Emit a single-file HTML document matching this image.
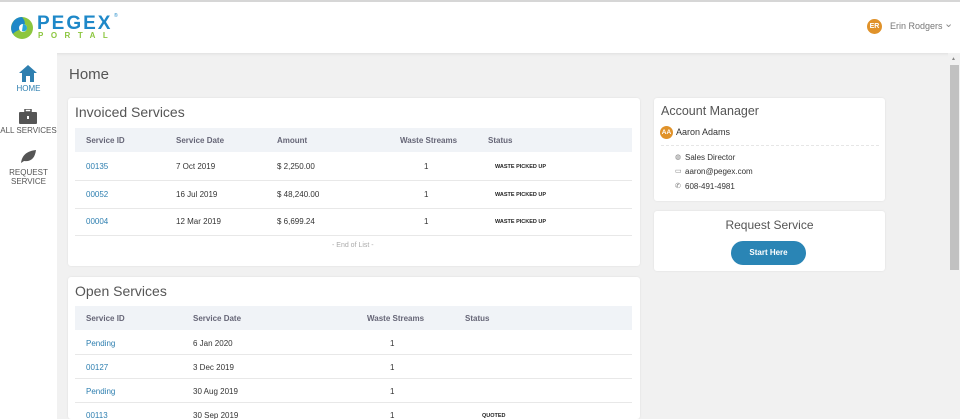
<!DOCTYPE html><html style="width:960px;height:419px;overflow:hidden"><head><style>
*{box-sizing:border-box;margin:0;padding:0}
body{width:960px;height:419px;overflow:hidden;background:#f1f1f1;font-family:"Liberation Sans",Arial,sans-serif;position:relative;color:#333}
.top{position:absolute;left:0;top:0;width:960px;height:53px;background:#fff;border-top:2px solid #d6d6d6;box-shadow:0 1px 3px rgba(0,0,0,.08)}
.side{position:absolute;left:0;top:53px;width:57px;height:366px;background:#fff}
.nav{position:absolute;width:57px;text-align:center;font-size:8px;color:#555}
.card{position:absolute;background:#fff;border-radius:3px;box-shadow:0 0 2px rgba(0,0,0,.08)}
.h{font-size:14px;color:#555;font-weight:300}
.a{position:absolute;font-size:8px;white-space:nowrap}
.th{position:absolute;left:7px;width:557px;height:24px;background:#f0f3f7}
.th .a{color:#667;font-weight:bold;top:8px;font-size:8px}
.line{position:absolute;left:7px;width:557px;height:1px;background:#e8e8e8}
.lnk{color:#2e7fb0}
.st{font-size:5.5px;font-weight:bold;color:#222}
</style></head><body>
<div class="top">
<svg style="position:absolute;left:10px;top:14px" width="26" height="24" viewBox="0 0 26 24"><circle cx="12" cy="12" r="11" fill="#8cc63f"/><path d="M12 1a11 11 0 0 0-9 17c3-4 9-4 11-8 2-3 0-7-2-9z" fill="#1e88c8"/><circle cx="13" cy="12" r="4" fill="#fff"/><path d="M13 8a4 4 0 0 1 4 4c0 3-3 4-5 3" fill="#29a6d6"/></svg>
<div style="position:absolute;left:37px;top:11px;font-size:19px;font-weight:bold;color:#1e88c8;letter-spacing:2px">PEGEX</div>
<div style="position:absolute;left:114px;top:11px;font-size:5px;color:#1e88c8">®</div>
<div style="position:absolute;left:38px;top:29px;font-size:8px;font-weight:bold;color:#8cc63f;letter-spacing:7.5px">PORTAL</div>
<div style="position:absolute;left:867px;top:17px;width:15px;height:15px;border-radius:50%;background:#e0922a;color:#fff;font-size:7px;font-weight:bold;text-align:center;line-height:15px">ER</div>
<div style="position:absolute;left:890px;top:19px;font-size:9px;color:#777">Erin Rodgers</div>
<div style="position:absolute;left:944px;top:15px;font-size:11px;color:#888">⌄</div>
</div>
<div class="side">
<svg style="position:absolute;left:18px;top:11px" width="20" height="19" viewBox="0 0 20 19"><path d="M10 1L1 9h3v9h4v-6h4v6h4V9h3z" fill="#2e7fb0"/></svg>
<div class="nav" style="top:31px;color:#2e7fb0">HOME</div>
<svg style="position:absolute;left:18px;top:56px" width="20" height="15" viewBox="0 0 20 15"><rect x="7" y="0" width="6" height="3" fill="none" stroke="#555" stroke-width="1.5"/><rect x="1" y="3" width="18" height="12" rx="1" fill="#555"/><rect x="9" y="7" width="2" height="3" fill="#fff"/></svg>
<div class="nav" style="top:73px">ALL SERVICES</div>
<svg style="position:absolute;left:19px;top:96px" width="18" height="15" viewBox="0 0 18 15"><path d="M2 14C3 6 8 2 17 1c-1 8-5 12-12 11L2 14z" fill="#555"/></svg>
<div class="nav" style="top:115px;line-height:9px">REQUEST<br>SERVICE</div>
</div>
<div style="position:absolute;left:69px;top:66px;font-size:15px;color:#555;font-weight:300">Home</div>
<div style="position:absolute;left:948px;top:53px;width:12px;height:366px;background:#f1f1f1"><div style="position:absolute;left:2px;top:12px;width:9px;height:205px;background:#c1c1c1"></div><div style="position:absolute;left:3px;top:3px;font-size:5px;color:#888">▲</div></div>

<div class="card" style="left:68px;top:98px;width:572px;height:168px">
<div class="h" style="position:absolute;left:7px;top:6px">Invoiced Services</div>
<div class="th" style="top:30px"><div class="a" style="left:11px">Service ID</div><div class="a" style="left:101px">Service Date</div><div class="a" style="left:202px">Amount</div><div class="a" style="left:325px">Waste Streams</div><div class="a" style="left:413px">Status</div></div>
<div class="a lnk" style="left:18px;top:64px">00135</div><div class="a" style="left:108px;top:64px">7 Oct 2019</div><div class="a" style="left:209px;top:64px">$ 2,250.00</div><div class="a" style="left:356px;top:64px">1</div><div class="a st" style="left:427px;top:66px">WASTE PICKED UP</div>
<div class="line" style="top:82px"></div>
<div class="a lnk" style="left:18px;top:92px">00052</div><div class="a" style="left:108px;top:92px">16 Jul 2019</div><div class="a" style="left:209px;top:92px">$ 48,240.00</div><div class="a" style="left:356px;top:92px">1</div><div class="a st" style="left:427px;top:94px">WASTE PICKED UP</div>
<div class="line" style="top:110px"></div>
<div class="a lnk" style="left:18px;top:119px">00004</div><div class="a" style="left:108px;top:119px">12 Mar 2019</div><div class="a" style="left:209px;top:119px">$ 6,699.24</div><div class="a" style="left:356px;top:119px">1</div><div class="a st" style="left:427px;top:121px">WASTE PICKED UP</div>
<div class="line" style="top:137px"></div>
<div class="a" style="left:264px;top:144px;color:#aaa;font-size:7px">- End of List -</div>
</div>

<div class="card" style="left:68px;top:277px;width:572px;height:142px">
<div class="h" style="position:absolute;left:7px;top:6px">Open Services</div>
<div class="th" style="top:29px"><div class="a" style="left:11px">Service ID</div><div class="a" style="left:118px">Service Date</div><div class="a" style="left:292px">Waste Streams</div><div class="a" style="left:390px">Status</div></div>
<div class="a lnk" style="left:18px;top:62px">Pending</div><div class="a" style="left:125px;top:62px">6 Jan 2020</div><div class="a" style="left:322px;top:62px">1</div>
<div class="line" style="top:77px"></div>
<div class="a lnk" style="left:18px;top:86px">00127</div><div class="a" style="left:125px;top:86px">3 Dec 2019</div><div class="a" style="left:322px;top:86px">1</div>
<div class="line" style="top:101px"></div>
<div class="a lnk" style="left:18px;top:110px">Pending</div><div class="a" style="left:125px;top:110px">30 Aug 2019</div><div class="a" style="left:322px;top:110px">1</div>
<div class="line" style="top:125px"></div>
<div class="a lnk" style="left:18px;top:134px">00113</div><div class="a" style="left:125px;top:134px">30 Sep 2019</div><div class="a" style="left:322px;top:134px">1</div><div class="a st" style="left:414px;top:136px">QUOTED</div>
</div>

<div class="card" style="left:654px;top:98px;width:231px;height:103px">
<div class="h" style="position:absolute;left:7px;top:6px;font-size:12.5px">Account Manager</div>
<div style="position:absolute;left:6px;top:28px;width:13px;height:13px;border-radius:50%;background:#e0922a;color:#fff;font-size:6.5px;font-weight:bold;text-align:center;line-height:13px">AA</div>
<div class="a" style="left:22px;top:29px;font-size:9px">Aaron Adams</div>
<div style="position:absolute;left:7px;top:47px;width:218px;border-top:1px dashed #e6e6e6"></div>
<div class="a" style="left:21px;top:55px;color:#777;font-size:7px">◍</div><div class="a" style="left:31px;top:55px">Sales Director</div>
<div class="a" style="left:21px;top:69px;color:#777;font-size:7px">▭</div><div class="a" style="left:31px;top:69px">aaron@pegex.com</div>
<div class="a" style="left:21px;top:84px;color:#777;font-size:7px">✆</div><div class="a" style="left:31px;top:84px">608-491-4981</div>
</div>

<div class="card" style="left:654px;top:211px;width:231px;height:60px">
<div class="h" style="position:absolute;left:0;width:231px;text-align:center;top:7px;font-size:12px">Request Service</div>
<div style="position:absolute;left:77px;top:30px;width:75px;height:24px;border-radius:12px;background:#2a85b5;color:#fff;font-size:8px;font-weight:bold;text-align:center;line-height:24px">Start Here</div>
</div>
</body></html>
